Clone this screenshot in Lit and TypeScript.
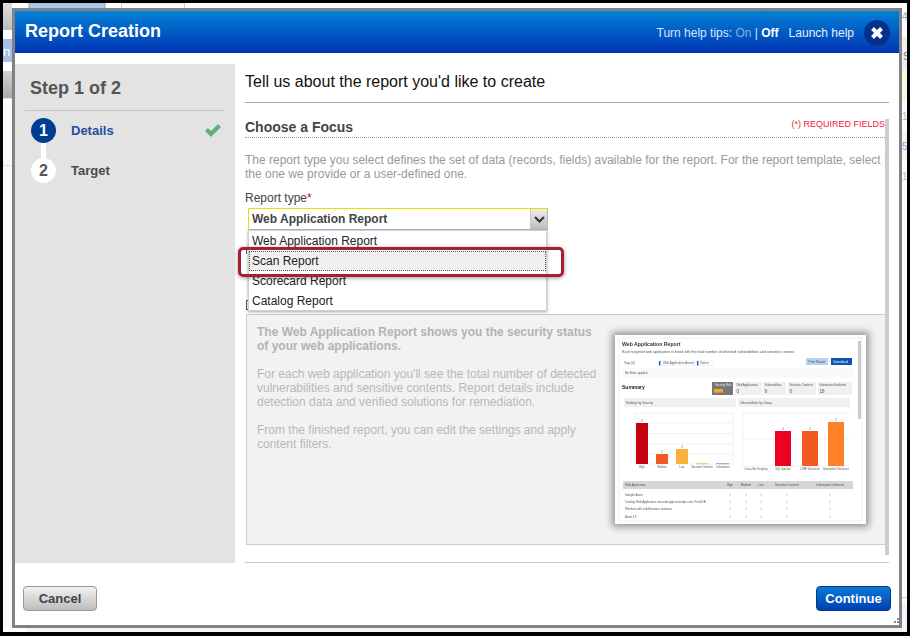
import { LitElement, html, css, svg } from "lit";
import { customElement } from "lit/decorators.js";

const FONT = `"Liberation Sans", Arial, sans-serif`;

// the blurred report preview inside the description panel
const preview = svg`
  <svg class="shot" width="251" height="189" viewBox="0 0 251 189" font-family="Liberation Sans, Arial, sans-serif" fill="#555">
    <rect width="251" height="189" fill="#fff"/>
    <rect x="4" y="3" width="243" height="183" fill="none" stroke="#e4e4e4" stroke-width=".6"/>
    <text x="7" y="11" font-size="5.2" font-weight="700" fill="#333">Web Application Report</text>
    <text x="7" y="17.5" font-size="3.6">Each targeted web application is listed with the total number of detected vulnerabilities and sensitive content.</text>
    <text x="9" y="29" font-size="3">Tags (0)</text>
    <rect x="44" y="26" width="37" height="4.5" fill="#fff" stroke="#ddd" stroke-width=".4"/>
    <rect x="44" y="26" width="1.4" height="4.5" fill="#0a62d0"/>
    <text x="48" y="29.4" font-size="3">Web Application Assets</text>
    <rect x="82" y="26" width="16" height="4.5" fill="#fff" stroke="#ddd" stroke-width=".4"/>
    <rect x="82" y="26" width="1.4" height="4.5" fill="#0a62d0"/>
    <text x="85" y="29.4" font-size="3">Owner</text>
    <rect x="191" y="23" width="22" height="7" fill="#b9d3ee"/>
    <text x="193.5" y="28" font-size="3.2">Print Report</text>
    <rect x="216" y="23" width="21" height="7" fill="#0a55b5"/>
    <text x="218.5" y="28" font-size="3.2" fill="#fff">Download</text>
    <rect x="7" y="33" width="231" height="10" fill="#fafafa"/>
    <text x="10" y="38.5" font-size="3">No filters applied</text>
    <text x="7" y="54" font-size="5" font-weight="700" fill="#222">Summary</text>
    <rect x="97" y="47" width="21" height="13" fill="#777"/>
    <text x="100" y="50.5" font-size="2.8" fill="#eee">Security Risk</text>
    <rect x="99" y="54" width="9" height="3.6" fill="#f5a623"/>
    ${[
      [120, 27, "Web Applications", "0"],
      [148, 23, "Vulnerabilities", "9"],
      [173, 28, "Sensitive Contents", "0"],
      [203, 34, "Information Gathered", "18"],
    ].map(
      ([x, w, t, n]) => svg`
        <rect x=${x} y="47" width=${w} height="13" fill="#f0f0f0"/>
        <text x=${(x as number) + 1.5} y="50.5" font-size="2.8">${t}</text>
        <text x=${(x as number) + 1.5} y="58" font-size="4.6">${n}</text>`,
    )}
    <rect x="9" y="63" width="112" height="9" fill="#f0f0f0"/>
    <text x="11" y="68.5" font-size="3">Findings by Severity</text>
    <rect x="123" y="63" width="112" height="9" fill="#f0f0f0"/>
    <text x="125" y="68.5" font-size="3">Vulnerabilities by Group</text>
    <g stroke="#e3e3e3" stroke-width=".5">
      <path d="M20 78H118M20 88H118M20 98.500H118M20 109H118M20 119H118M20 129H118M20 78V129M118 78V129" fill="none"/>
      <path d="M128 78H234M128 104H234M128 131H234M128 78V131" fill="none"/>
    </g>
    <rect x="21" y="88" width="12" height="41" fill="#c5000f"/>
    <rect x="41" y="119" width="12" height="10" fill="#f15a22"/>
    <rect x="61" y="114" width="12" height="15" fill="#fbb03b"/>
    <rect x="81" y="128.400" width="12" height=".8" fill="#e8b23b"/>
    <rect x="101" y="128.400" width="13" height=".8" fill="#4a90d0"/>
    <rect x="160" y="96" width="16" height="35" fill="#ee0020"/>
    <rect x="187" y="96" width="16" height="35" fill="#f15a22"/>
    <rect x="213" y="87" width="16" height="44" fill="#ff8029"/>
    <g font-size="2.6" text-anchor="middle">
      <text x="27" y="86.500">9</text><text x="47" y="117.500">2</text><text x="67" y="112.500">3</text>
      <text x="168" y="94.500">4</text><text x="195" y="94.500">4</text><text x="221" y="85.500">5</text>
      <text x="27" y="133">High</text><text x="47" y="133">Medium</text><text x="67" y="133">Low</text>
      <text x="87" y="133">Sensitive Contents</text><text x="108" y="133">Information</text>
      <text x="141" y="135">Cross-Site Scripting</text><text x="168" y="135">SQL Injection</text>
      <text x="195" y="135">CSRF Disclosure</text><text x="221" y="135">Information Disclosure</text>
    </g>
    <rect x="8" y="146" width="230" height="8" fill="#d6d6d6"/>
    <g font-size="2.900">
      <text x="10" y="151">Web Application</text>
      <text x="10" y="160.500">Sample Asset</text>
      <text x="10" y="167.500">Catalog Web Application site.web.apps.example.com, Prod-DB</text>
      <text x="10" y="175">Wireless with valid browser sessions</text>
      <text x="10" y="182.500">Asset 19</text>
    </g>
    <g font-size="2.900" text-anchor="middle">
      <text x="115" y="151">High</text><text x="131" y="151">Medium</text><text x="146" y="151">Low</text>
      <text x="172" y="151">Sensitive Contents</text><text x="215" y="151">Information Gathered</text>
      ${[160.5, 167.5, 175, 182.5].map(
        (y) => svg`
          <text x="115" y=${y} fill="#aaa">0</text><text x="131" y=${y} fill="#aaa">0</text>
          <text x="146" y=${y} fill="#aaa">0</text><text x="172" y=${y} fill="#aaa">0</text>
          <text x="215" y=${y} fill="#aaa">0</text>`,
      )}
    </g>
    <rect x="243" y="6" width="3" height="78" fill="#c9c9c9"/>
  </svg>`;

@customElement("app-root")
export class AppRoot extends LitElement {
  static styles = css`
    :host {
      display: block;
      position: relative;
      width: 910px;
      height: 636px;
      box-sizing: border-box;
      border: solid #000;
      border-width: 3px 3px 4px 3px;
      background: #fff;
      overflow: hidden;
      font-family: ${css([FONT] as unknown as TemplateStringsArray)};
      font-size: 12px;
      color: #444;
    }
    * {
      box-sizing: border-box;
    }
    .backdrop {
      position: absolute;
      left: -3px;
      top: -3px;
    }
    .modal {
      position: relative;
      display: flex;
      flex-direction: column;
      width: 890px;
      height: 620px;
      margin: 5px 0 0 9px;
      border: 3px solid #808285;
      background: #fff;
    }
    .head {
      display: flex;
      align-items: center;
      height: 42px;
      padding: 0 9px 0 10px;
      background: linear-gradient(#0481d6, #0035b3);
      color: #fff;
    }
    .head h1 {
      margin: 0 auto 2px 0;
      font-size: 18px;
      font-weight: 700;
    }
    .tips {
      margin-top: 2px;
      color: #d5e8ff;
    }
    .tips .on {
      color: #7fb3dc;
    }
    .tips b {
      color: #fff;
    }
    .launch {
      margin: 2px 0 0 10px;
      color: #e4f0ff;
    }
    .close {
      display: flex;
      align-items: center;
      justify-content: center;
      width: 26px;
      height: 26px;
      margin: 1px 0 0 10px;
      border-radius: 50%;
      background: #05308c;
    }
    .body {
      display: flex;
      height: 510px;
      padding-top: 11px;
    }
    .side {
      width: 220px;
      padding: 0 10px;
      background: #e3e3e3;
    }
    .side h2 {
      margin: 0;
      padding: 12px 5px 0;
      height: 47px;
      border-bottom: 1px solid #c4c4c4;
      font-size: 18px;
      line-height: 24px;
      font-weight: 700;
      color: #555;
    }
    .steps {
      position: relative;
      display: flex;
      flex-direction: column;
      gap: 15px;
      padding: 7px 0 0 6px;
    }
    .steps::before {
      content: "";
      position: absolute;
      left: 16px;
      top: 30px;
      width: 5px;
      height: 20px;
      background: #fff;
    }
    .step {
      position: relative;
      display: flex;
      align-items: center;
      height: 25px;
      font-size: 13px;
      font-weight: 700;
      color: #4a4a4a;
    }
    .num {
      display: flex;
      align-items: center;
      justify-content: center;
      width: 25px;
      height: 25px;
      margin-right: 15px;
      border-radius: 50%;
      background: #fff;
      color: #555;
      font-size: 16px;
    }
    .step.done {
      color: #1f4ea3;
    }
    .step.done .num {
      background: #003d92;
      color: #fff;
    }
    .step svg {
      margin-left: auto;
      margin-right: 4px;
    }
    .main {
      display: flex;
      flex-direction: column;
      width: 644px;
      margin-left: 10px;
    }
    .main > h2 {
      flex: none;
      margin: 0;
      height: 39px;
      padding-top: 8px;
      border-bottom: 1px solid #aaa;
      font-size: 16px;
      line-height: 20px;
      font-weight: 400;
      color: #111;
    }
    .scroll {
      display: flex;
      height: 460px;
      border-bottom: 1px solid #c8c8c8;
    }
    .content {
      width: 640px;
    }
    .bar {
      flex: none;
      width: 4px;
      height: 436px;
      margin-top: 16px;
      background: #cfcbc7;
    }
    .focus {
      display: flex;
      justify-content: space-between;
      height: 35px;
      padding-top: 16px;
      border-bottom: 1px dotted #999;
    }
    .focus h3 {
      margin: 0;
      font-size: 14px;
      line-height: 16px;
      font-weight: 700;
      color: #444;
    }
    .req {
      margin-top: -1px;
      font-size: 9px;
      line-height: 12px;
      color: #f0203c;
    }
    .intro {
      margin: 15px 0 0;
      line-height: 14px;
      color: #999;
    }
    .field {
      position: relative;
      margin-top: 9px;
    }
    .field label {
      display: block;
      line-height: 16px;
    }
    .req-star {
      color: #d0021b;
    }
    .select {
      display: flex;
      align-items: center;
      width: 300px;
      height: 22px;
      margin: 2px 0 0 3px;
      padding-left: 3px;
      border: 1px solid #b8b8b8;
      border-top-color: #e8e000;
      border-left-color: #e8e000;
      border-bottom-color: #a9c4dc;
      font-weight: 700;
      color: #444;
    }
    .arrow {
      display: flex;
      align-items: center;
      justify-content: center;
      width: 17px;
      height: 20px;
      margin-left: auto;
      background: linear-gradient(#eee, #bdbdbd);
      border-left: 1px solid #c8c8c8;
    }
    /* slivers of the form labels that the open list covers */
    .sliver-a {
      width: 1px;
      height: 6px;
      margin: 18px 0 0 1px;
      background: #666;
    }
    .sliver-b {
      width: 3px;
      height: 10px;
      margin: 46px 0 0 1px;
      border: solid #555;
      border-width: 1px 0 1px 1px;
    }
    .list {
      position: absolute;
      left: 3px;
      top: 40px;
      width: 299px;
      height: 81px;
      background: #fff;
      border: 1px solid #d0d0d0;
      box-shadow: 0 1px 3px rgba(0, 0, 0, 0.35);
      color: #222;
    }
    .list div {
      height: 20px;
      padding-left: 3px;
      line-height: 20px;
    }
    .list .hover {
      background: #f0f0f0;
      outline: 1px dotted #555;
      outline-offset: -1px;
    }
    .callout {
      position: absolute;
      left: -7px;
      top: 57px;
      width: 326px;
      height: 30px;
      border: 3px solid #a61f33;
      border-radius: 5px;
      box-shadow: 0 1px 4px rgba(0, 0, 0, 0.4);
    }
    .panel {
      display: flex;
      justify-content: space-between;
      width: 640px;
      height: 231px;
      margin: 4px 0 0 1px;
      padding: 10px 19px 0 10px;
      border: 1px solid #ccc;
      background: #f2f2f2;
      color: #b8b8b8;
      line-height: 14px;
    }
    .panel p {
      margin: 0 0 14px;
    }
    .panel .lead {
      font-weight: 700;
      color: #b2b2b2;
    }
    .copy {
      width: 345px;
    }
    .frame {
      flex: none;
      height: 189px;
      margin-top: 10px;
      box-shadow: 0 0 7px 3px rgba(0, 0, 0, 0.38);
    }
    .shot {
      display: block;
      filter: blur(0.6px);
    }
    .foot {
      display: flex;
      justify-content: space-between;
      padding: 23px 8px 0;
    }
    button {
      width: 74px;
      height: 25px;
      padding: 0 0 1px;
      border-radius: 4px;
      font-family: inherit;
      font-size: 13px;
      font-weight: 700;
    }
    .cancel {
      border: 1px solid #999;
      background: linear-gradient(#f2f2f2, #bdbdbd);
      color: #3d4450;
    }
    .go {
      width: 75px;
      border: 1px solid #033a85;
      background: linear-gradient(#0a7ad4, #0040b4);
      color: #fff;
    }
    .grip {
      position: absolute;
      right: -1px;
      bottom: 0;
    }
  `;

  render() {
    return html`
      <svg class="backdrop" width="910" height="636">
        <defs>
          <linearGradient id="tab" x1="0" y1="0" x2="0" y2="1">
            <stop offset="0" stop-color="#dedede"/><stop offset="1" stop-color="#bcbcbc"/>
          </linearGradient>
          <linearGradient id="tab2" x1="0" y1="0" x2="0" y2="1">
            <stop offset="0" stop-color="#d2d2d2"/><stop offset="1" stop-color="#ababab"/>
          </linearGradient>
        </defs>
        <rect x="3" y="3" width="9" height="27" fill="url(#tab)"/>
        <rect x="29" y="3" width="76" height="6" fill="#a9c8ec" stroke="#8aa8cc"/>
        <rect x="121.500" y="3" width="63" height="6" fill="#fff" stroke="#ccc"/>
        <rect x="3" y="39" width="9" height="23" fill="#a4bfe8"/>
        <text x="3" y="56" font-size="13" font-family="Liberation Sans, Arial, sans-serif" fill="#fff">n</text>
        <rect x="3" y="71" width="9" height="27" fill="url(#tab2)"/>
        <rect x="3" y="98" width="9" height="530" fill="#fafafa"/>
        <path d="M3 98.500H12M3 165.500H12" stroke="#ccc" stroke-dasharray="1 1"/>
        <rect x="902" y="37" width="5" height="33" fill="#efefef"/>
        <rect x="902" y="70" width="5" height="31" fill="#fdf9e0"/>
        <rect x="902" y="130" width="5" height="30" fill="#f6f6f6"/>
        <text x="903" y="60" font-size="10" font-family="Liberation Sans, Arial, sans-serif" fill="#777">S</text>
        <text x="902" y="20" font-size="10" font-family="Liberation Sans, Arial, sans-serif" fill="#7aa7d8">4</text>
        <text x="902" y="120" font-size="10" font-family="Liberation Sans, Arial, sans-serif" fill="#d9a8b2">1</text>
        <text x="902" y="150" font-size="10" font-family="Liberation Sans, Arial, sans-serif" fill="#7aa7d8">5.</text>
        <text x="902" y="180" font-size="10" font-family="Liberation Sans, Arial, sans-serif" fill="#d9a8b2">1</text>
        <path d="M902 597.500H907" stroke="#ccc"/>
        <rect x="902" y="604" width="5" height="28" fill="#f2f6fb"/>
        <rect x="27" y="628" width="880" height="4" fill="#f2f6fb"/>
      </svg>
      <div class="modal">
        <header class="head">
          <h1>Report Creation</h1>
          <span class="tips">Turn help tips: <span class="on">On</span> | <b>Off</b></span>
          <span class="launch">Launch help</span>
          <span class="close">
            <svg width="14" height="14" viewBox="0 0 14 14">
              <path d="M2.500 2.500L11.500 11.500M11.500 2.500L2.500 11.500" stroke="#fff" stroke-width="4" stroke-linecap="butt"/>
            </svg>
          </span>
        </header>
        <div class="body">
          <aside class="side">
            <h2>Step 1 of 2</h2>
            <div class="steps">
              <div class="step done">
                <span class="num">1</span>Details
                <svg width="16" height="13" viewBox="0 0 16 13">
                  <path d="M0.500 7L3 4.500L6 7.500L13 0.500L15.500 3L6 12.500Z" fill="#5cb270" stroke="#3f9a58" stroke-width=".6"/>
                </svg>
              </div>
              <div class="step"><span class="num">2</span>Target</div>
            </div>
          </aside>
          <section class="main">
            <h2>Tell us about the report you'd like to create</h2>
            <div class="scroll">
              <div class="content">
                <div class="focus">
                  <h3>Choose a Focus</h3>
                  <span class="req">(*) REQUIRED FIELDS</span>
                </div>
                <p class="intro">
                  The report type you select defines the set of data (records, fields) available for the report. For the report template, select the one we provide or a user-defined one.
                </p>
                <div class="field">
                  <label>Report type<span class="req-star">*</span></label>
                  <div class="select">
                    Web Application Report
                    <span class="arrow">
                      <svg width="11" height="7" viewBox="0 0 11 7">
                        <path d="M1 1L5.500 5.500L10 1" fill="none" stroke="#333" stroke-width="2"/>
                      </svg>
                    </span>
                  </div>
                  <div class="sliver-a"></div>
                  <div class="sliver-b"></div>
                  <div class="list">
                    <div>Web Application Report</div>
                    <div class="hover">Scan Report</div>
                    <div>Scorecard Report</div>
                    <div>Catalog Report</div>
                  </div>
                  <div class="callout"></div>
                </div>
                <div class="panel">
                  <div class="copy">
                    <p class="lead">The Web Application Report shows you the security status of your web applications.</p>
                    <p>For each web application you'll see the total number of detected vulnerabilities and sensitive contents. Report details include detection data and verified solutions for remediation.</p>
                    <p>From the finished report, you can edit the settings and apply content filters.</p>
                  </div>
                  <div class="frame">${preview}</div>
                </div>
              </div>
              <div class="bar"></div>
            </div>
          </section>
        </div>
        <footer class="foot">
          <button class="cancel">Cancel</button>
          <button class="go">Continue</button>
        </footer>
        <svg class="grip" width="7" height="7" fill="#8a8a8a">
          <rect x="4" y="0" width="2" height="2"/><rect x="1" y="3" width="2" height="2"/><rect x="4" y="3" width="2" height="2"/>
        </svg>
      </div>
    `;
  }
}
